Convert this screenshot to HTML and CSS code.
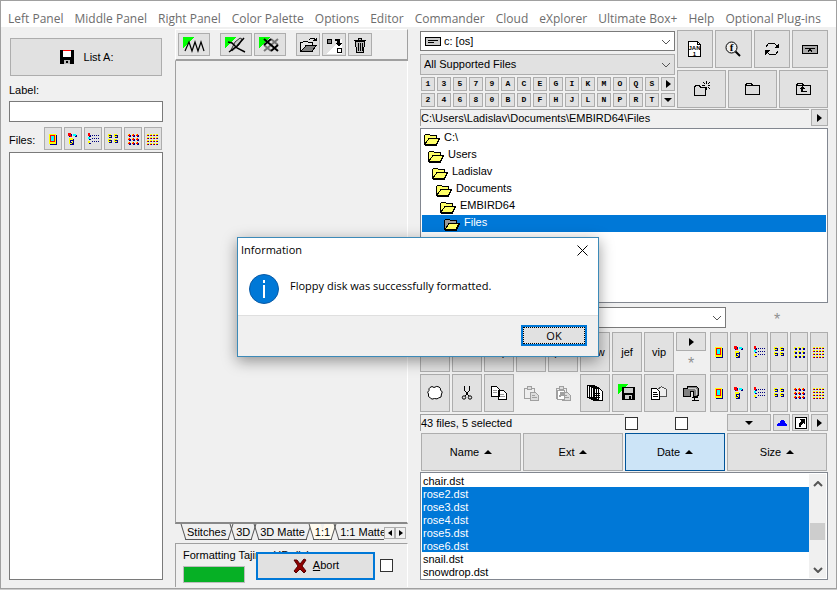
FILE: index.html
```html
<!DOCTYPE html>
<html lang="en">
<head>
<meta charset="utf-8">
<title>Embird Manager</title>
<link rel="stylesheet" href="styles.css">
</head>
<body>
<svg class="defs" width="0" height="0" aria-hidden="true">
  <defs>
    <g id="dr"><path fill="#000080" d="M1 1h2v2H1z"/><path fill="#ff0" d="M0 0h1v1H0z"/><path fill="red" d="M1 0h1v1H1zM0 1h2v1H0z"/></g>
    <g id="db"><path fill="#000080" d="M1 1h2v2H1z"/><path fill="#ff0" d="M0 0h2v1H0zM0 1h1v1H0z"/></g>
    <g id="ds"><path fill="#000080" d="M1 1h1v1H1z"/><path fill="#ff0" d="M0 0h2v1H0z"/><path fill="red" d="M0 1h1v1H0z"/></g>
    <g id="dr-row"><use href="#dr"/><use href="#dr" x="4"/><use href="#dr" x="8"/></g>
    <g id="db-row"><use href="#db"/><use href="#db" x="4"/><use href="#db" x="8"/></g>
    <g id="ds-row"><use href="#ds"/><use href="#ds" x="3"/><use href="#ds" x="6"/><use href="#ds" x="9"/></g>
  </defs>
  <symbol id="g1" viewBox="0 0 16 16"><path fill="#000080" d="M5 4h7v10H5z"/><path fill="#ff0" d="M4 3h7v10H4z"/><path fill="red" d="M5 4h5v7H5z"/><path fill="#0ff" d="M6 5h3v5H6z"/></symbol>
  <symbol id="g2" viewBox="0 0 16 16"><path fill="#000080" d="M4 3h3v3H4zM10 4h2v2h-2zM5 8h4v6H5z"/><path fill="red" d="M3 2h3v3H3zM5 5h2v1H5z"/><path fill="#0ff" d="M8 3h3v2H8z"/><path fill="#ff0" d="M4 7h4v2H4zM4 9h1v4H4zM5 12h2v1H5zM7 10h1v2H7z"/><path fill="#eee" d="M6 10h1v1H6z"/></symbol>
  <symbol id="g3" viewBox="0 0 16 16"><path fill="#000080" d="M4 4h2v2H4zM4 8h2v1H4zM4 12h2v1H4zM7 4h1v1H7zM9 4h1v1H9zM11 4h1v1h-1zM13 4h1v1h-1zM7 7h1v1H7zM9 7h1v1H9zM11 7h1v1h-1zM13 7h1v1h-1zM7 10h1v1H7zM9 10h1v1H9zM11 10h1v1h-1zM13 10h1v1h-1z"/><path fill="red" d="M3 2h2v3H3z"/><path fill="#0ff" d="M3 6h2v2H3z"/><path fill="#ff0" d="M3 10h2v2H3z"/></symbol>
  <symbol id="g4" viewBox="0 0 16 16"><path fill="#000080" d="M4 4h3v3H4zM10 4h3v3h-3zM4 9h3v3H4zM10 9h3v3h-3z"/><path fill="#ff0" d="M3 3h3v1H4v2H3zM4 5h2v1H4zM9 3h3v1h-2v2H9zM10 5h2v1h-2zM3 8h3v1H4v2H3zM4 10h2v1H4zM9 8h3v1h-2v2H9zM10 10h2v1h-2z"/></symbol>
  <symbol id="g9r" viewBox="0 0 16 16"><use href="#dr-row" x="3" y="3"/><use href="#dr-row" x="3" y="7"/><use href="#dr-row" x="3" y="11"/></symbol>
  <symbol id="g9b" viewBox="0 0 16 16"><use href="#db-row" x="3" y="3"/><use href="#db-row" x="3" y="7"/><use href="#db-row" x="3" y="11"/></symbol>
  <symbol id="g16" viewBox="0 0 16 16"><use href="#ds-row" x="2" y="3"/><use href="#ds-row" x="2" y="6"/><use href="#ds-row" x="2" y="9"/><use href="#ds-row" x="2" y="12"/></symbol>
  <symbol id="floppy" viewBox="0 0 16 16"><path d="M1 1h13l1 1v13H1z"/><path fill="#fff" d="M4 1h8v7H4z"/><path fill="red" d="M4 1h8v1H4z"/><path fill="#bbb" d="M5 11h6v4H5z"/><path d="M7 12h2v2H7z"/></symbol>
  <symbol id="folder" viewBox="0 0 16 16"><path fill="#dcdcdc" stroke="#000" d="M.5 13.500v-9l1-2h5l1 2h7v9z"/><path fill="none" stroke="#000" d="M.5 4.500h7"/></symbol>
  <symbol id="open" viewBox="0 0 17 15"><path fill="#ffff66" stroke="#000" d="M.5 12.500v-9l1-1h4l1 1h6v3h3l-3 6z"/><path fill="none" stroke="#000" d="M1 12l4-5.500h8"/><path stroke="#000" d="M1 13.500h12"/></symbol>
  <symbol id="open-sel" viewBox="0 0 17 15"><path fill="#999" stroke="#000" d="M.5 12.500v-9l1-1h4l1 1h6v3h3l-3 6z"/><path fill="#ffff66" stroke="#000" d="M1 12.500l4-6h10l-3 6z"/><path stroke="#000" d="M1 13.500h12"/></symbol>
  <symbol id="clip" viewBox="0 0 16 16"><path fill="#eee" stroke="#a0a0a0" d="M1.500 3.500h10v10h-10z"/><path fill="#ddd" stroke="#a0a0a0" d="M4.500 1.500h4v3h-4zM7.500 7.500h5l3 3v5h-8z"/><path stroke="#a0a0a0" d="M9 10.500h3M9 12.500h5"/></symbol>
</svg>

<main class="window">
  <nav class="menu">
    <a href="#">Left Panel</a><a href="#">Middle Panel</a><a href="#">Right Panel</a><a href="#">Color Palette</a><a href="#">Options</a><a href="#">Editor</a><a href="#">Commander</a><a href="#">Cloud</a><a href="#">eXplorer</a><a href="#">Ultimate Box+</a><a href="#">Help</a><a href="#">Optional Plug-ins</a>
  </nav>

  <div class="panels">
    <section class="left">
      <button class="btn list-a"><svg class="ico"><use href="#floppy"/></svg>List A:</button>
      <label for="label-text">Label:</label>
      <input id="label-text" class="field" type="text">
      <div class="files-head">
        <span>Files:</span>
        <div class="grids">
          <button class="btn" aria-label="One"><svg class="ico"><use href="#g1"/></svg></button>
          <button class="btn" aria-label="Scattered"><svg class="ico"><use href="#g2"/></svg></button>
          <button class="btn" aria-label="Details"><svg class="ico"><use href="#g3"/></svg></button>
          <button class="btn" aria-label="Four"><svg class="ico"><use href="#g4"/></svg></button>
          <button class="btn" aria-label="Nine"><svg class="ico"><use href="#g9r"/></svg></button>
          <button class="btn" aria-label="Sixteen"><svg class="ico"><use href="#g16"/></svg></button>
        </div>
      </div>
      <div class="files-box"></div>
    </section>

    <section class="middle">
      <div class="toolbar">
        <button class="btn wide" aria-label="Stitches"><svg class="ico-w" viewBox="0 0 24 18"><path fill="#0f0" d="M1 1h11L1 12z"/><path class="soft" fill="none" stroke="#000" stroke-width="1.200" d="M3 15l4-9 3 9 3-9 3 9 3-9 3 9"/></svg></button>
        <button class="btn wide apart" aria-label="Remove stitches"><svg class="ico-w" viewBox="0 0 24 18"><path fill="#0f0" d="M1 1h11L1 12z"/><path class="soft" fill="#ccc" stroke="#333" d="M7 14l4-8 5-4 2 1-3 6-7 6z"/><path class="soft" fill="none" stroke="#000" stroke-width="1.500" d="M4 6l4 1 5 5 8 4M20 2l-7 8-8 6"/></svg></button>
        <button class="btn wide" aria-label="Crosses"><svg class="ico-w" viewBox="0 0 24 18"><path fill="#0f0" d="M1 1h11L1 12z"/><path class="soft" fill="none" stroke="#777" stroke-width="2" d="M13 3l7 6M20 3l-7 6M6 9l7 6M13 9l-7 6"/><path class="soft" fill="none" stroke="#000" stroke-width="2" d="M6 3l7 6M13 3L6 9M13 9l7 6M20 9l-7 6"/></svg></button>
        <button class="btn apart" aria-label="Open"><svg class="ico-l" viewBox="0 0 20 18"><path fill="#e8e8e8" stroke="#000" d="M2.500 15.500v-9h2l1-1h4l1 1h4v3"/><path fill="#808080" stroke="#000" d="M3 15.500l5-6h10l-4 6z"/><path fill="none" stroke="#000" d="M11 4l2-2h3l2 3M15 4.500h3V2"/></svg></button>
        <button class="btn" aria-label="Convert"><svg class="ico-l" viewBox="0 0 20 18"><path fill="#fff" d="M18 2v16H2z"/><path fill="#808080" stroke="#000" d="M3.500 3.500h4v4h-4z"/><path fill="#fff" stroke="#000" d="M13.500 12.500h4v4h-4z"/><path d="M11 3h4l1 1v3h2l-3 4-4-4h2V5h-2z"/></svg></button>
        <button class="btn" aria-label="Delete"><svg class="ico-l" viewBox="0 0 20 18"><path fill="#bbb" stroke="#000" d="M5.500 5.500h9l-1 11h-7zM4 4.500h12M8.500 4V2.500h3V4"/><path stroke="#000" d="M8.500 7v8M10.500 7v8M12.500 7v8"/></svg></button>
      </div>
      <div class="canvas"></div>
      <div class="tabs">
        <div class="tab-strip"><button class="tab">Stitches</button><button class="tab">3D</button><button class="tab">3D Matte</button><button class="tab on">1:1</button><button class="tab">1:1 Matte</button></div>
        <div class="pager"><button aria-label="Previous"><i class="tri l"></i></button><button aria-label="Next"><i class="tri r small"></i></button></div>
      </div>
      <div class="job">
        <div class="job-info"><span>Formatting Tajima HD disk</span><div class="bar"></div></div>
        <button class="abort"><svg class="ico" viewBox="0 0 16 16"><path class="soft" fill="#900000" stroke="#500" d="M2 2h3l3 4 4-5 2 1-4 6 4 5-2 2-4-4-4 4-2-2 4-5z"/></svg><span><u>A</u>bort</span></button>
        <input class="check" type="checkbox" aria-label="Shut down afterwards">
      </div>
    </section>

    <section class="right">
      <div class="top">
        <div class="picks">
          <div class="pick drive"><svg class="drive-ico" viewBox="0 0 16 9"><path fill="#ccc" stroke="#000" d="M.5.5h15v8H.5z"/><path stroke="#000" d="M3 3.500h10M3 5.500h6"/></svg><select aria-label="Drive"><option>c: [os]</option></select><svg class="chev" viewBox="0 0 10 6"><path d="M1 1l4 4 4-4"/></svg></div>
          <div class="pick grey"><select aria-label="File type"><option>All Supported Files</option></select><svg class="chev" viewBox="0 0 10 6"><path d="M1 1l4 4 4-4"/></svg></div>
          <div class="keys">
            <button>1</button><button>3</button><button>5</button><button>7</button><button>9</button><button>A</button><button>C</button><button>E</button><button>G</button><button>I</button><button>K</button><button>M</button><button>O</button><button>Q</button><button>S</button><button aria-label="Right"><i class="tri r"></i></button>
            <button>2</button><button>4</button><button>6</button><button>8</button><button>0</button><button>B</button><button>D</button><button>F</button><button>H</button><button>J</button><button>L</button><button>N</button><button>P</button><button>R</button><button>T</button><button aria-label="Down"><i class="tri d"></i></button>
          </div>
        </div>
        <div class="tools">
          <div class="tool-row">
            <button class="btn" aria-label="Date"><svg class="ico" viewBox="0 0 16 16"><path fill="#fff" stroke="#000" d="M1.500.5h9l3 3v12h-12z"/><path fill="none" stroke="#000" d="M10.500.5v3h3"/><text x="7.500" y="9" class="t-cal">JAN</text><text x="7.500" y="15" class="t-cal">1</text></svg></button>
            <button class="btn" aria-label="Find"><svg class="ico" viewBox="0 0 16 16"><circle class="soft" cx="6.500" cy="6.500" r="5.500" fill="#eee" stroke="#000"/><text x="6.500" y="10" class="t-find">f</text><path class="soft" stroke="#000" stroke-width="2" d="M10.500 10.500l4.500 4.500"/></svg></button>
            <button class="btn" aria-label="Refresh"><svg class="ico" viewBox="0 0 16 16"><path fill="none" stroke="#000" d="M2 6l2-3 3-1 4 1 2 2M14 10l-2 3-3 1-4-1-2-2"/><path d="M15 2v5h-5zM1 14V9h5z"/></svg></button>
            <button class="btn" aria-label="Drive"><svg class="ico" viewBox="0 0 16 16"><path fill="#aaa" stroke="#000" d="M.5 4.500h15v8H.5z"/><path fill="none" stroke="#000" d="M3 7.500h10M6 10.500l2-2 2 2"/></svg></button>
          </div>
          <div class="tool-row">
            <button class="btn" aria-label="New folder"><svg class="ico" viewBox="0 0 16 16"><path fill="#dcdcdc" stroke="#000" d="M.5 14.500v-8l1-2h4l1 2h5v8z"/><path stroke="#000" fill="none" d="M12.500 0v3M12.500 6v3M8 4.500h3M14 4.500h2M9 1l2 2M16 1l-2 2M14 6l2 2"/></svg></button>
            <button class="btn" aria-label="Folder"><svg class="ico"><use href="#folder"/></svg></button>
            <button class="btn" aria-label="Parent folder"><svg class="ico" viewBox="0 0 16 16"><use href="#folder" width="16" height="16"/><path d="M6 5l3 3H7v2h4v1H5V8H3z"/></svg></button>
          </div>
        </div>
      </div>

      <div class="path-row"><div class="sunken">C:\Users\Ladislav\Documents\EMBIRD64\Files</div><button class="btn" aria-label="Go"><i class="tri r"></i></button></div>

      <ul class="tree">
        <li><svg class="fold"><use href="#open"/></svg>C:\</li>
        <li class="in1"><svg class="fold"><use href="#open"/></svg>Users</li>
        <li class="in2"><svg class="fold"><use href="#open"/></svg>Ladislav</li>
        <li class="in3"><svg class="fold"><use href="#open"/></svg>Documents</li>
        <li class="in4"><svg class="fold"><use href="#open"/></svg>EMBIRD64</li>
        <li class="in5 sel"><svg class="fold"><use href="#open-sel"/></svg>Files</li>
      </ul>

      <div class="mask"><div class="pick"><select aria-label="File mask"><option></option></select><svg class="chev" viewBox="0 0 10 6"><path d="M1 1l4 4 4-4"/></svg></div><span class="star">*</span></div>

      <div class="formats">
        <div class="nine">
          <button class="btn">dst</button><button class="btn">hus</button><button class="btn">exp</button><button class="btn">xxx</button><button class="btn">pes</button><button class="btn">sew</button><button class="btn">jef</button><button class="btn">vip</button>
          <div class="more"><button class="btn" aria-label="More formats"><i class="tri r"></i></button><span class="star">*</span></div>
        </div>
        <div class="grids">
          <button class="btn" aria-label="One"><svg class="ico"><use href="#g1"/></svg></button>
          <button class="btn" aria-label="Scattered"><svg class="ico"><use href="#g2"/></svg></button>
          <button class="btn" aria-label="Details"><svg class="ico"><use href="#g3"/></svg></button>
          <button class="btn" aria-label="Four"><svg class="ico"><use href="#g4"/></svg></button>
          <button class="btn" aria-label="Nine"><svg class="ico"><use href="#g9b"/></svg></button>
          <button class="btn" aria-label="Sixteen"><svg class="ico"><use href="#g16"/></svg></button>
        </div>
      </div>

      <div class="formats edit">
        <div class="nine">
          <button class="btn" aria-label="Select shape"><svg class="ico" viewBox="0 0 16 16"><path class="soft" fill="#fff" stroke="#000" d="M3 2.500q2-2 4 0 3-2 5-.5 2 1 1.500 3 3 2 1 4 .5 4-3 4-1 1.500-4 .5-3 1.500-4-.5-3-1-2-4-2-2 .5-3.500-.500-2 1-3z"/></svg></button>
          <button class="btn" aria-label="Cut"><svg class="ico" viewBox="0 0 16 16"><path fill="none" stroke="#000" d="M5.500 1v4l4 6M10.500 1v4l-4 6"/><circle class="soft" cx="5" cy="12.500" r="1.700" fill="none" stroke="#000"/><circle class="soft" cx="11" cy="12.500" r="1.700" fill="none" stroke="#000"/></svg></button>
          <button class="btn" aria-label="Copy"><svg class="ico" viewBox="0 0 16 16"><path fill="#fff" stroke="#000" d="M.5 1.500h5l3 3v7h-8zM7.500 5.500h5l3 3v6h-8z"/><path stroke="#999" d="M2 5.500h4M2 7.500h4M9 9.500h4M9 11.500h5"/></svg></button>
          <button class="btn flat" disabled aria-label="Paste"><svg class="ico"><use href="#clip"/></svg></button>
          <button class="btn flat" disabled aria-label="Paste link"><svg class="ico" viewBox="0 0 16 16"><use href="#clip" width="16" height="16"/><path fill="#fff" stroke="#a0a0a0" d="M2.500 5.500h7v9h-7z"/><path stroke="#a0a0a0" stroke-width="2" fill="none" d="M4 12l3-3M5 8h3v3"/></svg></button>
          <button class="btn" aria-label="Copy all"><svg class="ico" viewBox="0 0 16 16"><path fill="#fff" stroke="#000" d="M.5.5h7v12h-7zM2.500 1.500h7v12h-7zM4.500 2.500h7v12h-7zM6.500 3.500h6l3 3v9h-9z"/><path stroke="#000" d="M8 8.500h5M8 10.500h5M8 12.500h5"/></svg></button>
          <button class="btn" aria-label="Save"><svg class="ico-l" viewBox="0 0 20 18"><path fill="#0f0" d="M1 0h10L1 10z"/><path d="M5 3h13v13H5z"/><path fill="#ccc" d="M7 4h9v5H7zM8 11h7v4H8z"/><path d="M12 12h2v3h-2z"/></svg></button>
          <button class="btn" aria-label="Copy to"><svg class="ico" viewBox="0 0 16 16"><path fill="#eee" stroke="#555" d="M6.500 4.500l4-3 5 3v7h-9z"/><path fill="#fff" stroke="#000" d="M.5 3.500h5l3 3v8h-8z"/><path stroke="#000" d="M2 7.500h4M2 9.500h5M2 11.500h5"/></svg></button>
          <button class="btn" aria-label="Compress"><svg class="ico" viewBox="0 0 16 16"><path fill="#808080" stroke="#000" d="M.5 11.500v-8h4v-2h9l2 2v7l-2 1h-3v-5h-3v5z"/><path fill="none" stroke="#ccc" d="M5 3.500h7l1 1v5"/><path fill="#999" stroke="#000" d="M8.500 12.500h6M8.500 15.500h7v-1M11.500 12v3"/></svg></button>
        </div>
        <div class="grids">
          <button class="btn" aria-label="One"><svg class="ico"><use href="#g1"/></svg></button>
          <button class="btn" aria-label="Scattered"><svg class="ico"><use href="#g2"/></svg></button>
          <button class="btn" aria-label="Details"><svg class="ico"><use href="#g3"/></svg></button>
          <button class="btn" aria-label="Four"><svg class="ico"><use href="#g4"/></svg></button>
          <button class="btn" aria-label="Nine"><svg class="ico"><use href="#g9r"/></svg></button>
          <button class="btn" aria-label="Sixteen"><svg class="ico"><use href="#g16"/></svg></button>
        </div>
      </div>

      <div class="status">
        <div class="sunken">43 files, 5 selected</div>
        <div class="checks"><input class="check" type="checkbox" aria-label="Filter one"><input class="check" type="checkbox" aria-label="Filter two"></div>
        <div class="status-btns">
          <button class="btn" aria-label="Expand"><i class="tri d"></i></button>
          <button class="btn" aria-label="Cloud"><svg class="ico-s" viewBox="0 0 12 12"><path fill="#00f" d="M1 9V7h1V6h2V4h1V3h3v1h1v2h1v1h1v2z"/></svg></button>
          <button class="btn" aria-label="Shortcut"><svg class="ico-s" viewBox="0 0 12 12"><path fill="#fff" stroke="#000" d="M.5.5h11v11H.5z"/><path d="M4 2h6v6L8 6 6 8v2H4V7l2-3z"/></svg></button>
          <button class="btn" aria-label="Next"><i class="tri r"></i></button>
        </div>
      </div>

      <div class="heads">
        <button class="btn">Name<i class="tri u"></i></button><button class="btn">Ext<i class="tri u"></i></button><button class="btn active">Date<i class="tri u"></i></button><button class="btn">Size<i class="tri u"></i></button>
      </div>

      <div class="files">
        <ul><li>chair.dst</li><li class="sel">rose2.dst</li><li class="sel">rose3.dst</li><li class="sel">rose4.dst</li><li class="sel">rose5.dst</li><li class="sel">rose6.dst</li><li>snail.dst</li><li>snowdrop.dst</li></ul>
        <div class="scroll">
          <svg viewBox="0 0 10 6"><path d="M1 5l4-4 4 4"/></svg>
          <div class="thumb"></div>
          <svg viewBox="0 0 10 6"><path d="M1 1l4 4 4-4"/></svg>
        </div>
      </div>
    </section>
  </div>
</main>

<section class="dialog" role="dialog" aria-labelledby="dlg-title">
  <header><span id="dlg-title">Information</span><button class="close" aria-label="Close"><svg viewBox="0 0 11 11"><path d="M.5.5l10 10M10.500.5l-10 10"/></svg></button></header>
  <div class="message">
    <svg class="info" viewBox="0 0 30 30"><circle cx="15" cy="15" r="14.500" fill="#0078d7" stroke="#0a5aa5"/><path fill="#fff" d="M14 6h2v3h-2zM14 11h2v13h-2z"/></svg>
    <p>Floppy disk was successfully formatted.</p>
  </div>
  <footer><button class="ok"><span>OK</span></button></footer>
</section>
</body>
</html>
```
FILE: styles.css
```css
* { box-sizing: border-box; }
body {
  margin: 0;
  background: #ccc;
  color: #000;
  font: 11px/13px "Liberation Sans", Arial, sans-serif;
}
button, input, select { font: inherit; color: inherit; margin: 0; padding: 0; border-radius: 0; }
ul, p { margin: 0; padding: 0; list-style: none; }
svg { display: block; flex: none; shape-rendering: crispEdges; }
.soft { shape-rendering: auto; }
.defs { position: absolute; }
.ico { width: 16px; height: 16px; }
.ico-l { width: 20px; height: 18px; }
.ico-w { width: 24px; height: 18px; }
.ico-s { width: 12px; height: 12px; }
.t-cal { font-size: 6px; font-weight: bold; text-anchor: middle; }
.t-find { font: bold 11px "Liberation Serif", serif; text-anchor: middle; }

.window {
  display: flex;
  flex-direction: column;
  min-height: calc(100vh - 1px);
  border: 1px solid #a0a0a0;
  background: #f0f0f0;
}
.menu {
  display: flex;
  justify-content: space-between;
  align-items: flex-end;
  height: 26px;
  padding: 0 15px 0 7px;
  background: #fff;
  font: 12px/16px "Open Sans", "Noto Sans", sans-serif;
}
.menu a { color: #6d6d6d; text-decoration: none; white-space: nowrap; }
.panels {
  flex: 1;
  display: grid;
  grid-template-columns: 154fr 233fr 408fr;
  gap: 12px;
  padding: 0 8px;
}
.panels > section { display: flex; flex-direction: column; min-width: 0; }

.btn {
  display: flex;
  align-items: center;
  justify-content: center;
  min-width: 0;
  border: 1px solid #adadad;
  background: #e1e1e1;
}
.flat { border-color: transparent; background: none; }
.grids { display: grid; grid-template-columns: repeat(6, 1fr); gap: 2px; }
.field, .files-box { border: 1px solid #7a7a7a; background: #fff; }
.check {
  appearance: none;
  width: 13px;
  height: 13px;
  border: 1px solid #333;
  background: #fff;
}
.tri { width: 0; height: 0; border: 4px solid transparent; }
.tri.r { border-width: 4px 0 4px 5px; border-left-color: #000; }
.tri.small { border-width: 3px 0 3px 4px; }
.tri.l { border-width: 3px 4px 3px 0; border-right-color: #000; }
.tri.d { border-width: 4px 4px 0; border-top-color: #000; }
.tri.u { border-width: 0 4px 4px; border-bottom-color: #000; margin-left: 5px; }

.left { padding: 11px 0 8px; }
.list-a { height: 38px; margin: 0 1px; gap: 9px; }
.left label { margin: 8px 0 4px; }
.field { height: 21px; width: 100%; }
.files-head { display: flex; justify-content: space-between; align-items: center; margin: 5px 1px 2px 0; }
.files-head span { padding-top: 4px; }
.files-head .grids { width: 118px; }
.files-head .btn { height: 23px; }
.files-box { flex: 1; }

.middle { padding: 2px 0 1px; }
.toolbar {
  display: flex;
  gap: 2px;
  padding: 3px 2px;
  border: solid #a0a0a0;
  border-width: 1px 1px 2px 0;
  border-top-color: #fff;
  border-left: 1px solid #fff;
}
.toolbar .btn { width: 24px; height: 23px; }
.toolbar .wide { width: 32px; }
.toolbar .apart { margin-left: 8px; }
.canvas {
  flex: 1;
  border: 1px solid #a0a0a0;
  border-width: 0 1px 2px;
  border-right-color: #fff;
  border-bottom-color: #888;
}
.tabs { display: flex; height: 19px; padding: 0 2px 0 7px; }
.tab-strip { flex: 1; display: flex; min-width: 0; }
.tab {
  position: relative;
  z-index: 0;
  flex: none;
  height: 16px;
  padding: 0 5px;
  border: 0;
  background: none;
  line-height: 16px;
  white-space: nowrap;
}
.tab::before, .tab::after {
  content: "";
  position: absolute;
  z-index: -1;
  top: 0;
  bottom: 0;
  border-bottom: 1px solid #555;
}
.tab::before { left: 1px; right: 50%; border-left: 1px solid #555; transform: skewX(17deg); }
.tab::after { left: 50%; right: 1px; border-right: 1px solid #555; transform: skewX(-17deg); }
.tab.on::before, .tab.on::after { background: #fffbf0; }
.pager { position: relative; display: flex; align-items: center; height: 17px; background: #f0f0f0; }
.pager button { display: grid; place-items: center; width: 11px; height: 12px; border: 1px solid #adadad; background: #f0f0f0; }
.job {
  display: flex;
  align-items: center;
  height: 44px;
  padding-left: 7px;
  border: 1px solid #a0a0a0;
  border-width: 1px 0 0 1px;
  border-right: 1px solid #fff;
}
.job-info { width: 73px; white-space: nowrap; }
.bar { width: 62px; height: 17px; margin-top: 4px; border: 1px solid #bcbcbc; background: #06b025; }
.abort {
  position: relative;
  display: flex;
  align-items: center;
  justify-content: center;
  gap: 5px;
  width: 119px;
  height: 28px;
  border: 2px solid #0078d7;
  background: #e1e1e1;
}
.job .check { margin-left: 5px; }

.right { padding: 3px 0 8px; }
.top { display: grid; grid-template-columns: 255fr 151fr; gap: 2px; }
.pick { position: relative; display: flex; align-items: center; border: 1px solid #7a7a7a; background: #fff; }
.pick select { appearance: none; width: 100%; height: 19px; border: 0; padding-left: 3px; background: none; }
.drive { height: 20px; margin: 1px 0 3px; padding-left: 4px; }
.drive-ico { width: 16px; height: 9px; }
.grey { border-color: #adadad; background: #e1e1e1; height: 21px; }
.chev { position: absolute; right: 3px; top: 7px; width: 10px; height: 6px; fill: none; stroke: #555; shape-rendering: auto; pointer-events: none; }
.keys { display: grid; grid-template-columns: repeat(16, 1fr); gap: 2px; margin: 2px 0 0 1px; }
.keys button {
  display: grid;
  place-items: center;
  min-width: 0;
  height: 14px;
  border: 1px solid #adadad;
  background: #e1e1e1;
  font: bold 8px/10px "Liberation Mono", monospace;
}
.tools { display: flex; flex-direction: column; gap: 2px; }
.tool-row { display: flex; gap: 2px; height: 38px; }
.tool-row .btn { flex: 1; }

.sunken { border: solid #a0a0a0; border-width: 1px 0 0 1px; padding: 2px 0 0; white-space: nowrap; }
.path-row { display: grid; grid-template-columns: 389fr 17fr; gap: 2px; height: 17px; margin: 1px 0 2px; }
.tree { min-height: 175px; border: 1px solid #828790; background: #fff; padding: 1px; }
.tree li { display: flex; gap: 3px; height: 17px; padding-left: 2px; line-height: 15px; }
.fold { width: 17px; height: 15px; margin-top: 2px; }
.tree .in1 { padding-left: 6px; }
.tree .in2 { padding-left: 10px; }
.tree .in3 { padding-left: 14px; }
.tree .in4 { padding-left: 18px; }
.tree .in5 { padding-left: 22px; }
.sel { background: #0078d7; color: #fff; }
.mask { display: grid; grid-template-columns: 306fr 102fr; margin: 4px 0; }
.star { color: #909090; font-size: 16px; line-height: 26px; height: 20px; text-align: center; }
.formats { display: grid; grid-template-columns: 286fr 118fr; gap: 4px; height: 40px; margin-bottom: 2px; }
.edit { height: 38px; }
.nine { display: grid; grid-template-columns: repeat(9, 1fr); gap: 2px; }
.more { display: grid; grid-template-rows: 19px 1fr; }
.status { display: grid; grid-template-columns: 204fr 101fr 101fr; gap: 1px; height: 17px; margin-bottom: 2px; }
.checks { display: flex; gap: 37px; padding-top: 3px; }
.status-btns { display: grid; grid-template-columns: 44fr 17fr 17fr 17fr; gap: 2px; }
.heads { display: grid; grid-template-columns: repeat(4, 1fr); gap: 2px; height: 38px; margin: 0 1px 1px; }
.active { border-color: #005499; background: #cce4f7; }
.files { flex: 1; display: flex; border: 1px solid #828790; padding: 1px; background: #fff; }
.files ul { flex: 1; }
.files li { height: 13px; padding-left: 1px; line-height: 15px; }
.scroll { display: flex; flex-direction: column; align-items: center; width: 17px; padding: 7px 0 5px; background: #f0f0f0; }
.scroll svg { width: 10px; height: 6px; fill: none; stroke: #555; stroke-width: 2; shape-rendering: auto; }
.thumb { width: 15px; height: 17px; margin: 36px 0 auto; background: #cdcdcd; }

.dialog {
  position: absolute;
  left: 237px;
  top: 237px;
  width: 362px;
  border: 1px solid #3c8ab8;
  background: #fff;
  box-shadow: 0 4px 14px rgba(0, 0, 0, .4);
  font: 11px/16px "Open Sans", "Noto Sans", sans-serif;
}
.dialog header { display: flex; justify-content: space-between; align-items: center; height: 24px; padding: 0 10px 0 3px; }
.close { border: 0; background: none; }
.close svg { width: 11px; height: 11px; stroke: #000; shape-rendering: auto; }
.message { display: flex; gap: 11px; padding: 12px 11px 11px; }
.message p { padding-top: 4px; }
.info { width: 30px; height: 30px; shape-rendering: auto; }
.dialog footer { display: flex; justify-content: flex-end; padding: 9px 11px 10px; border-top: 1px solid #dfdfdf; background: #f0f0f0; }
.ok { width: 66px; height: 21px; border: 2px solid #0078d7; background: #e1e1e1; }
.ok span { display: block; border: 1px dotted #000; line-height: 15px; }
```
